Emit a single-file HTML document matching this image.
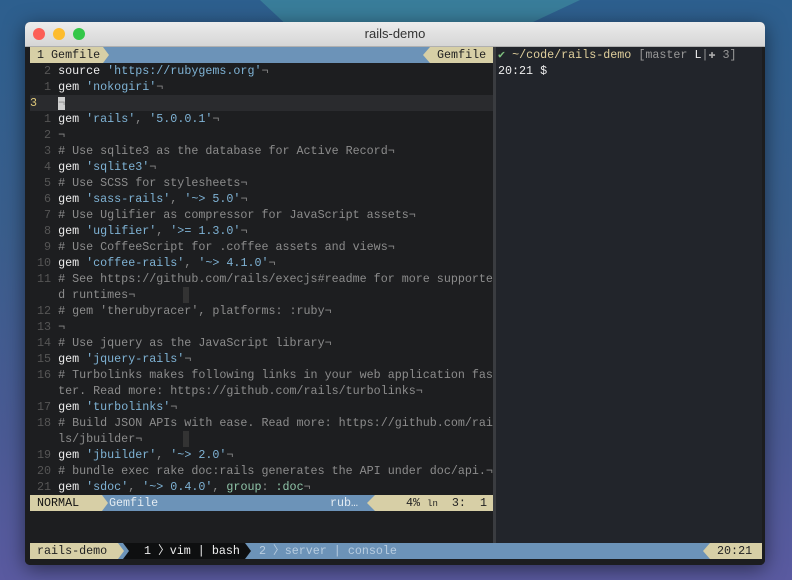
<!DOCTYPE html>
<html><head><meta charset="utf-8"><style>
*{margin:0;padding:0;box-sizing:border-box}
body{width:792px;height:580px;overflow:hidden;position:relative;background:linear-gradient(180deg,#2d5f8e 0%,#3a5e8c 40%,#4a5a94 75%,#5a5aa0 100%);font-family:"Liberation Mono",monospace;}
.shape{position:absolute;left:260px;top:0;width:320px;height:30px;background:#3f8aa0;clip-path:polygon(0 0,100% 0,80% 100%,10% 100%);opacity:.7}
.win{position:absolute;left:25px;top:22px;width:740px;height:543px;background:#1c1d1f;border-radius:5px;overflow:hidden;box-shadow:0 4px 20px rgba(0,0,0,.5)}
.title{position:absolute;left:0;top:0;width:740px;height:25px;background:linear-gradient(#ececec,#d6d6d6);border-bottom:1px solid #b0b0b0;font-family:"Liberation Sans",sans-serif;font-size:13px;color:#333;text-align:center;line-height:24px}
.dot{position:absolute;top:6px;width:12px;height:12px;border-radius:50%}
.r{position:absolute;height:16px;line-height:16px;font-size:11.7px;white-space:pre;color:#8a8a8a}
.n{color:#555}
.k{color:#ececec}
.s{color:#7fb3d5}
.c{color:#8c8c8c}
.y{color:#e0c97a}
.t{color:#8fc4a8}
.bar{position:absolute;height:16px;line-height:16px;font-size:11.7px;white-space:pre}
</style></head><body>
<div class="shape"></div>
<div class="win">
<div class="title">rails-demo
<div class="dot" style="left:8px;background:#fc5f57"></div>
<div class="dot" style="left:28px;background:#fdbc2e"></div>
<div class="dot" style="left:48px;background:#33c748"></div>
</div>
<div style="position:absolute;left:5px;top:25px;width:463px;height:496px;background:#1d1e20"></div>
<div style="position:absolute;left:468px;top:25px;width:3px;height:496px;background:#3a3c40"></div>
<div style="position:absolute;left:471px;top:25px;width:266px;height:496px;background:#22252b"></div>
<div class="bar" style="left:5px;top:25px;width:463px;background:#6c93b8"></div>
<div class="bar" style="left:5px;top:25px;width:79px;background:#d7cfa6;color:#222;clip-path:polygon(0 0,73px 0,79px 8px,73px 16px,0 16px)"> 1 Gemfile</div>
<div class="bar" style="left:398px;top:25px;width:70px;background:#d7cfa6;color:#222;clip-path:polygon(7px 0,70px 0,70px 16px,7px 16px,0 8px)">  Gemfile </div>
<div style="position:absolute;left:5px;top:73px;width:463px;height:16px;background:#2a2b2e"></div>
<div style="position:absolute;left:33px;top:75px;width:7px;height:13px;background:#cfcfcf"></div>
<div style="position:absolute;left:158px;top:265px;width:6px;height:16px;background:#333"></div>
<div style="position:absolute;left:158px;top:409px;width:6px;height:16px;background:#333"></div>
<div id="code"></div>
<div class="bar" style="left:5px;top:473px;width:463px;background:#6c93b8;color:#dde6ee"></div>
<div class="bar" style="left:5px;top:473px;width:78px;background:#d7cfa6;color:#111;clip-path:polygon(0 0,72px 0,78px 8px,72px 16px,0 16px)"> NORMAL</div>
<div class="bar" style="left:84px;top:473px;color:#e4ecf2">Gemfile</div>
<div class="bar" style="left:305px;top:473px;color:#e4ecf2">rub…</div>
<div class="bar" style="left:342px;top:473px;width:126px;background:#d7cfa6;color:#222;text-align:right;padding-right:6px;clip-path:polygon(8px 0,126px 0,126px 16px,8px 16px,0 8px)">4% <span style="font-size:9px">ln</span>  3:  1</div>
<div class="bar" style="left:473px;top:25px;color:#ddd"><span style="color:#7fc27f">✔</span> <span style="color:#e0cf9c">~/code/rails-demo</span> <span style="color:#999">[master</span> <span style="color:#eee">L</span><span style="color:#999">|</span><span style="color:#aaa">✚</span><span style="color:#999"> 3]</span></div>
<div class="bar" style="left:473px;top:41px;color:#eee">20:21 $</div>
<div style="position:absolute;left:0;top:521px;width:740px;height:22px;background:#1c1d1f"></div>
<div class="bar" style="left:5px;top:521px;width:732px;background:#6c93b8;color:#dce6ef"></div>
<div class="bar" style="left:5px;top:521px;width:94px;background:#d7cfa6;color:#222;clip-path:polygon(0 0,88px 0,94px 8px,88px 16px,0 16px)"> rails-demo</div>
<div class="bar" style="left:98px;top:521px;width:128px;background:#0e0f10;color:#eee;clip-path:polygon(0 0,122px 0,128px 8px,122px 16px,0 16px,6px 8px)">   1 〉vim | bash</div>
<div class="bar" style="left:234px;top:521px;color:#b8cde0">2 〉server | console</div>
<div class="bar" style="left:678px;top:521px;width:59px;background:#d7cfa6;color:#222;clip-path:polygon(7px 0,59px 0,59px 16px,7px 16px,0 8px)">  20:21 </div>
</div>
<script>
var L=[
['  2 ','<span class="k">source</span> <span class="s">\'https://rubygems.org\'</span>¬'],
['  1 ','<span class="k">gem</span> <span class="s">\'nokogiri\'</span>¬'],
['<span class="y">3</span>   ','¬'],
['  1 ','<span class="k">gem</span> <span class="s">\'rails\'</span>, <span class="s">\'5.0.0.1\'</span>¬'],
['  2 ','¬'],
['  3 ','<span class="c"># Use sqlite3 as the database for Active Record¬</span>'],
['  4 ','<span class="k">gem</span> <span class="s">\'sqlite3\'</span>¬'],
['  5 ','<span class="c"># Use SCSS for stylesheets¬</span>'],
['  6 ','<span class="k">gem</span> <span class="s">\'sass-rails\'</span>, <span class="s">\'~> 5.0\'</span>¬'],
['  7 ','<span class="c"># Use Uglifier as compressor for JavaScript assets¬</span>'],
['  8 ','<span class="k">gem</span> <span class="s">\'uglifier\'</span>, <span class="s">\'>= 1.3.0\'</span>¬'],
['  9 ','<span class="c"># Use CoffeeScript for .coffee assets and views¬</span>'],
[' 10 ','<span class="k">gem</span> <span class="s">\'coffee-rails\'</span>, <span class="s">\'~> 4.1.0\'</span>¬'],
[' 11 ','<span class="c"># See https://github.com/rails/execjs#readme for more supporte</span>'],
['    ','<span class="c">d runtimes¬</span>'],
[' 12 ','<span class="c"># gem \'therubyracer\', platforms: :ruby¬</span>'],
[' 13 ','¬'],
[' 14 ','<span class="c"># Use jquery as the JavaScript library¬</span>'],
[' 15 ','<span class="k">gem</span> <span class="s">\'jquery-rails\'</span>¬'],
[' 16 ','<span class="c"># Turbolinks makes following links in your web application fas</span>'],
['    ','<span class="c">ter. Read more: https://github.com/rails/turbolinks¬</span>'],
[' 17 ','<span class="k">gem</span> <span class="s">\'turbolinks\'</span>¬'],
[' 18 ','<span class="c"># Build JSON APIs with ease. Read more: https://github.com/rai</span>'],
['    ','<span class="c">ls/jbuilder¬</span>'],
[' 19 ','<span class="k">gem</span> <span class="s">\'jbuilder\'</span>, <span class="s">\'~> 2.0\'</span>¬'],
[' 20 ','<span class="c"># bundle exec rake doc:rails generates the API under doc/api.¬</span>'],
[' 21 ','<span class="k">gem</span> <span class="s">\'sdoc\'</span>, <span class="s">\'~> 0.4.0\'</span>, <span class="t">group</span>: <span class="t">:doc</span>¬']
];
var h='';
for(var i=0;i<L.length;i++){h+='<div class="r" style="left:5px;top:'+(41+i*16)+'px"><span class="n">'+L[i][0]+'</span>'+L[i][1]+'</div>';}
document.getElementById('code').innerHTML=h;
</script>
</body></html>
